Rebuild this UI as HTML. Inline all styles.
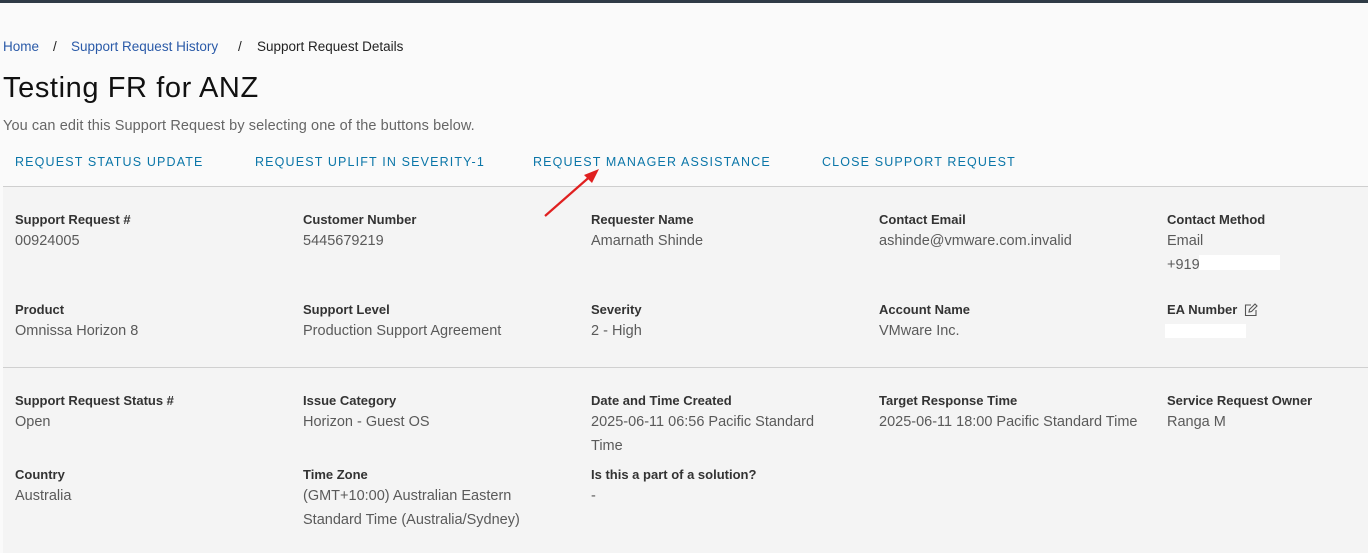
<!DOCTYPE html>
<html><head><meta charset="utf-8"><style>
*{margin:0;padding:0;box-sizing:border-box}
body{width:1368px;height:553px;overflow:hidden;background:#fafafa;font-family:"Liberation Sans",sans-serif;position:relative}
.top{position:absolute;left:0;top:0;width:1368px;height:3px;background:#2f3b46}
.t{position:absolute;white-space:nowrap}
.bc{top:39px;font-size:13.5px;color:#222}
.bc a{color:#2a5aa8;text-decoration:none}
.h1{left:3px;top:72px;font-size:29px;letter-spacing:0.6px;color:#111;font-weight:normal}
.sub{left:3px;top:118px;font-size:14.5px;color:#666;letter-spacing:0.1px}
.btn{top:155px;font-size:12.5px;letter-spacing:1.15px;color:#0b76a8}
.panel{position:absolute;left:3px;top:186px;width:1365px;height:367px;background:#f4f4f4;border-top:1px solid #cfcfcf}
.div2{position:absolute;left:3px;top:367px;width:1365px;height:1px;background:#d0d0d0}
.l{font-size:13px;font-weight:bold;color:#333}
.v{font-size:14.5px;color:#5a5a5a;line-height:24px}
.w{position:absolute;background:#fff}
</style></head><body>
<div class="top"></div>
<div class="t bc" style="left:3px"><a>Home</a></div>
<div class="t bc" style="left:53px">/</div>
<div class="t bc" style="left:71px"><a>Support Request History</a></div>
<div class="t bc" style="left:238px">/</div>
<div class="t bc" style="left:257px">Support Request Details</div>
<div class="t h1">Testing FR for ANZ</div>
<div class="t sub">You can edit this Support Request by selecting one of the buttons below.</div>
<div class="t btn" style="left:15px">REQUEST STATUS UPDATE</div>
<div class="t btn" style="left:255px">REQUEST UPLIFT IN SEVERITY-1</div>
<div class="t btn" style="left:533px">REQUEST MANAGER ASSISTANCE</div>
<div class="t btn" style="left:822px">CLOSE SUPPORT REQUEST</div>
<div class="panel"></div>
<div class="div2"></div>
<svg style="position:absolute;left:540px;top:165px" width="64" height="55"><line x1="5" y1="51" x2="54" y2="8" stroke="#e02020" stroke-width="2.2"/><polygon points="59,4 44,10 52,18" fill="#e02020"/></svg>

<div class="t l" style="left:15px;top:212px">Support Request #</div><div class="t v" style="left:15px;top:229px">00924005</div>
<div class="t l" style="left:303px;top:212px">Customer Number</div><div class="t v" style="left:303px;top:229px">5445679219</div>
<div class="t l" style="left:591px;top:212px">Requester Name</div><div class="t v" style="left:591px;top:229px">Amarnath Shinde</div>
<div class="t l" style="left:879px;top:212px">Contact Email</div><div class="t v" style="left:879px;top:229px">ashinde@vmware.com.invalid</div>
<div class="t l" style="left:1167px;top:212px">Contact Method</div><div class="t v" style="left:1167px;top:229px">Email<br>+919</div>
<div class="w" style="left:1199px;top:255px;width:81px;height:15px"></div>

<div class="t l" style="left:15px;top:302px">Product</div><div class="t v" style="left:15px;top:319px">Omnissa Horizon 8</div>
<div class="t l" style="left:303px;top:302px">Support Level</div><div class="t v" style="left:303px;top:319px">Production Support Agreement</div>
<div class="t l" style="left:591px;top:302px">Severity</div><div class="t v" style="left:591px;top:319px">2 - High</div>
<div class="t l" style="left:879px;top:302px">Account Name</div><div class="t v" style="left:879px;top:319px">VMware Inc.</div>
<div class="t l" style="left:1167px;top:302px">EA Number</div>
<svg style="position:absolute;left:1244px;top:303px" width="14" height="14" fill="none" stroke="#555" stroke-width="1.1"><path d="M7 2H1.5v10.5H12V7"/><path d="M5 9l.5-2.5L11 1l2 2-5.5 5.5z"/></svg>
<div class="w" style="left:1165px;top:324px;width:81px;height:14px"></div>

<div class="t l" style="left:15px;top:393px">Support Request Status #</div><div class="t v" style="left:15px;top:410px">Open</div>
<div class="t l" style="left:303px;top:393px">Issue Category</div><div class="t v" style="left:303px;top:410px">Horizon - Guest OS</div>
<div class="t l" style="left:591px;top:393px">Date and Time Created</div><div class="t v" style="left:591px;top:410px">2025-06-11 06:56 Pacific Standard<br>Time</div>
<div class="t l" style="left:879px;top:393px">Target Response Time</div><div class="t v" style="left:879px;top:410px">2025-06-11 18:00 Pacific Standard Time</div>
<div class="t l" style="left:1167px;top:393px">Service Request Owner</div><div class="t v" style="left:1167px;top:410px">Ranga M</div>

<div class="t l" style="left:15px;top:467px">Country</div><div class="t v" style="left:15px;top:484px">Australia</div>
<div class="t l" style="left:303px;top:467px">Time Zone</div><div class="t v" style="left:303px;top:484px">(GMT+10:00) Australian Eastern<br>Standard Time (Australia/Sydney)</div>
<div class="t l" style="left:591px;top:467px">Is this a part of a solution?</div><div class="t v" style="left:591px;top:484px">-</div>
</body></html>
